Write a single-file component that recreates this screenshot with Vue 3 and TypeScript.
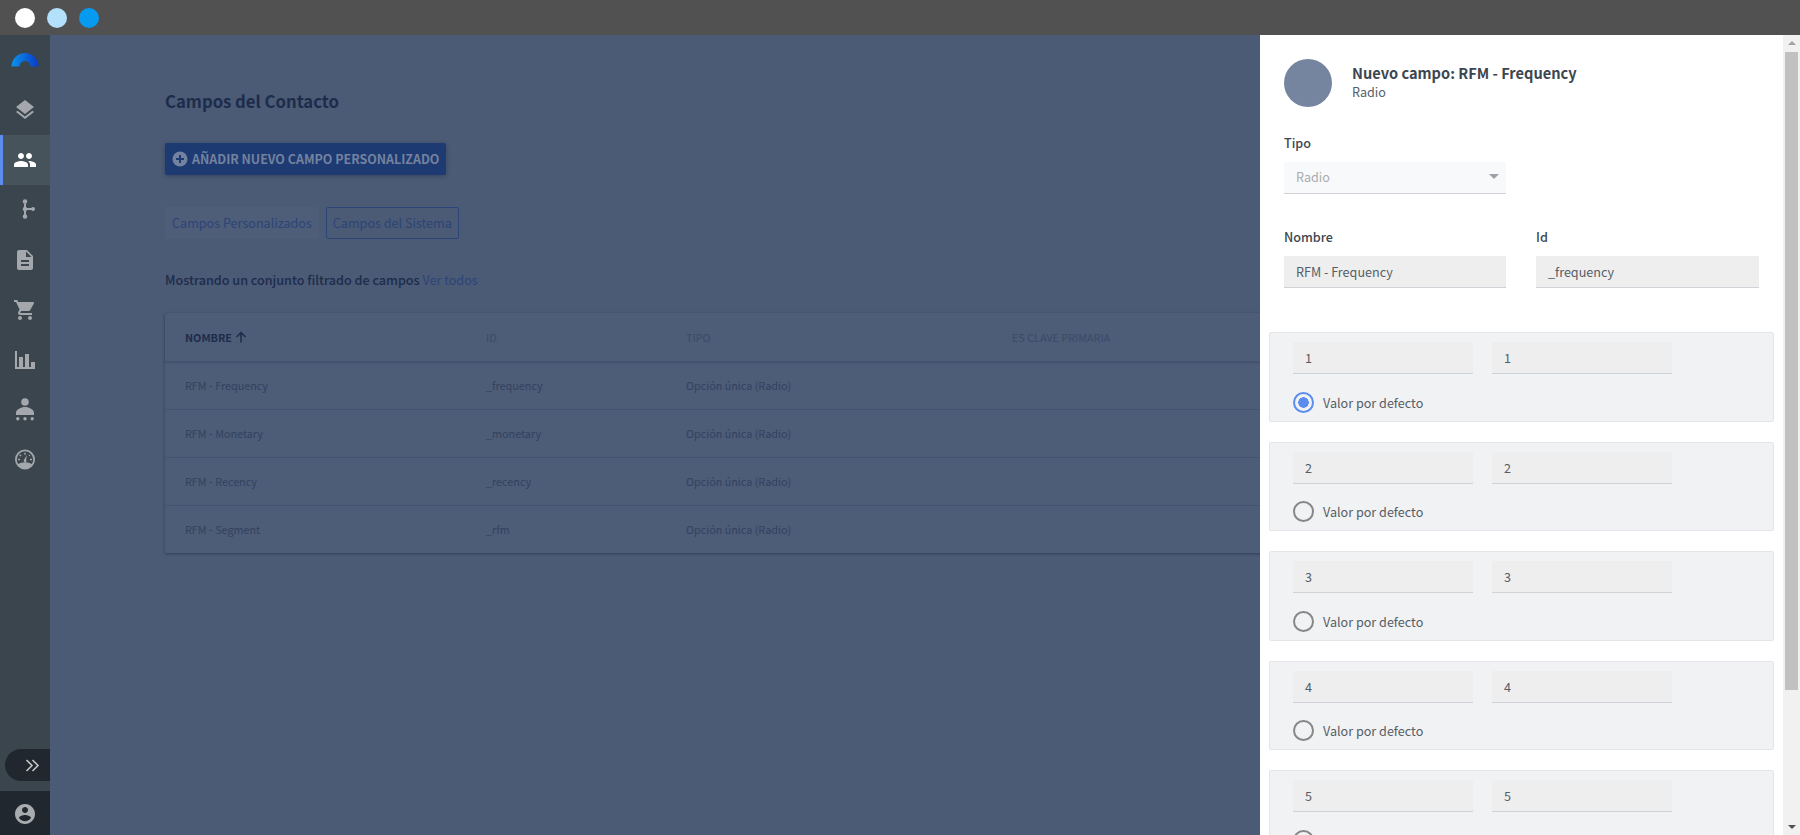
<script setup lang="ts">
const navIcons = [
  { name: 'layers', d: 'M11.99 18.54l-7.37-5.73L3 14.07l9 7 9-7-1.63-1.27-7.38 5.74zM12 16l7.36-5.73L21 9l-9-7-9 7 1.63 1.27L12 16z' },
  { name: 'people', active: true, d: 'M16 11c1.66 0 2.99-1.34 2.99-3S17.66 5 16 5c-1.66 0-3 1.34-3 3s1.34 3 3 3zm-8 0c1.66 0 2.99-1.34 2.99-3S9.66 5 8 5C6.34 5 5 6.34 5 8s1.34 3 3 3zm0 2c-2.33 0-7 1.17-7 3.5V19h14v-2.5c0-2.33-4.67-3.5-7-3.5zm8 0c-.29 0-.62.02-.97.05 1.16.84 1.97 1.97 1.97 3.45V19h6v-2.5c0-2.33-4.67-3.5-7-3.5z' },
  { name: 'flow', d: 'M11 3.500h2v15h-2zM12 10h7v2h-7zM12 1.200a2.300 2.300 0 1 1 0 4.600 2.300 2.300 0 0 1 0-4.600zM12 16.200a2.300 2.300 0 1 1 0 4.600 2.300 2.300 0 0 1 0-4.600zM12 8.700a2.300 2.300 0 1 1 0 4.600 2.300 2.300 0 0 1 0-4.600zM20 9a2 2 0 1 1 0 4 2 2 0 0 1 0-4z' },
  { name: 'description', d: 'M14 2H6c-1.1 0-1.99.9-1.99 2L4 20c0 1.1.89 2 1.99 2H18c1.1 0 2-.9 2-2V8l-6-6zm2 16H8v-2h8v2zm0-4H8v-2h8v2zm-3-5V3.5L18.5 9H13z' },
  { name: 'cart', d: 'M7 18c-1.1 0-1.99.9-1.99 2S5.9 22 7 22s2-.9 2-2-.9-2-2-2zM1 2v2h2l3.6 7.59-1.35 2.45c-.16.28-.25.61-.25.96 0 1.1.9 2 2 2h12v-2H7.42c-.14 0-.25-.11-.25-.25l.03-.12.9-1.63h7.45c.75 0 1.41-.41 1.75-1.03l3.58-6.49c.08-.14.12-.31.12-.48 0-.55-.45-1-1-1H5.21l-.94-2H1zm16 16c-1.1 0-1.99.9-1.99 2s.89 2 1.99 2 2-.9 2-2-.9-2-2-2z' },
  { name: 'chart', d: 'M2 3h2v16h18v2H2zM6 9h4v10H6zM12 6h4v13h-4zM18 14h4v5h-4z' },
  { name: 'segments', d: 'M12 .2a3.800 3.800 0 1 1 0 7.600 3.800 3.800 0 0 1 0-7.600zM3 17v-2.500C3 11.500 8 9 12 9s9 2.500 9 5.500V17zM4.800 19a1.700 1.700 0 1 1 0 3.400 1.700 1.700 0 0 1 0-3.400zM12 19a1.700 1.700 0 1 1 0 3.400 1.700 1.700 0 0 1 0-3.400zM19.200 19a1.700 1.700 0 1 1 0 3.400 1.700 1.700 0 0 1 0-3.400z' },
  { name: 'gauge', d: 'M12 1.500a10 10 0 1 0 0 20 10 10 0 0 0 0-20zm0 1.800a8.200 8.200 0 0 1 8.200 8.200c0 1.700-.5 3.300-1.400 4.600-1.800-1.200-4.200-1.900-6.800-1.900s-5 .7-6.800 1.900a8.200 8.200 0 0 1-1.400-4.600A8.200 8.200 0 0 1 12 3.300zM11.300 4.800h1.400v2h-1.400zM6.200 7.200l1-1 1.300 1.300-1 1zM5 10.800h2v1.400H5zM17 10.800h2v1.400h-2zM15.600 7.500l1-1 .8.8-1 1zM14 7l-.9 4.700a1.400 1.400 0 1 1-2.100.1z' },
]

const columns = ['ID', 'TIPO', 'ES CLAVE PRIMARIA']

const rows = [
  { name: 'RFM - Frequency', id: '_frequency' },
  { name: 'RFM - Monetary', id: '_monetary' },
  { name: 'RFM - Recency', id: '_recency' },
  { name: 'RFM - Segment', id: '_rfm' },
]

const options = [
  { value: '1', checked: true },
  { value: '2', checked: false },
  { value: '3', checked: false },
  { value: '4', checked: false },
  { value: '5', checked: false },
]
</script>

<template>
  <div class="app">
    <header class="topbar">
      <span class="dot dot-white"></span>
      <span class="dot dot-light"></span>
      <span class="dot dot-blue"></span>
    </header>

    <div class="workspace">
      <nav class="sidebar">
        <div class="logo">
          <svg width="28" height="15" viewBox="0 0 28 15">
            <defs>
              <linearGradient id="logoGrad" x1="0" y1="0" x2="1" y2="0">
                <stop offset="0" stop-color="#0b93ea" />
                <stop offset="1" stop-color="#0a3bc9" />
              </linearGradient>
            </defs>
            <path d="M0.500 14.500a13.500 13.500 0 0 1 27 0h-8a5.500 5.500 0 0 0-11 0z" fill="url(#logoGrad)" />
          </svg>
        </div>
        <a v-for="icon in navIcons" :key="icon.name" class="nav-item" :class="{ active: icon.active }">
          <svg width="24" height="24" viewBox="0 0 24 24" fill="currentColor"><path :d="icon.d" /></svg>
        </a>
        <div class="spacer"></div>
        <button type="button" class="expand">
          <svg width="15" height="13" viewBox="0 0 15 13" fill="none" stroke="currentColor" stroke-width="1.600">
            <path d="M1.500 1l5.500 5.500-5.500 5.500M7.500 1l5.500 5.500-5.500 5.500" />
          </svg>
        </button>
        <div class="user">
          <svg width="24" height="24" viewBox="0 0 24 24" fill="currentColor">
            <path d="M12 2C6.480 2 2 6.480 2 12s4.480 10 10 10 10-4.480 10-10S17.520 2 12 2zm0 3c1.660 0 3 1.340 3 3s-1.340 3-3 3-3-1.340-3-3 1.340-3 3-3zm0 14.200c-2.500 0-4.710-1.280-6-3.220.030-1.990 4-3.080 6-3.080 1.990 0 5.970 1.090 6 3.080-1.290 1.940-3.500 3.220-6 3.220z" />
          </svg>
        </div>
      </nav>

      <main class="main">
        <h1 class="title">Campos del Contacto</h1>
        <button type="button" class="btn-add">
          <svg class="btn-icon" width="16" height="16" viewBox="0 0 16 16">
            <circle cx="8" cy="8" r="7.500" fill="#74829f" />
            <path d="M7 4h2v3h3v2H9v3H7V9H4V7h3z" fill="#1d3a72" />
          </svg>
          AÑADIR NUEVO CAMPO PERSONALIZADO
        </button>
        <div class="tabs">
          <span class="tab">Campos Personalizados</span>
          <span class="tab selected">Campos del Sistema</span>
        </div>
        <p class="filter">Mostrando un conjunto filtrado de campos <a class="link">Ver todos</a></p>

        <div class="table">
          <div class="row head">
            <span class="sorted">
              NOMBRE
              <svg width="12" height="12" viewBox="0 0 12 12" fill="none" stroke="currentColor" stroke-width="1.500">
                <path d="M6 11.500V1.500M1.500 6L6 1.500 10.500 6" />
              </svg>
            </span>
            <span v-for="col in columns" :key="col">{{ col }}</span>
          </div>
          <div v-for="row in rows" :key="row.id" class="row">
            <span>{{ row.name }}</span>
            <span>{{ row.id }}</span>
            <span>Opción única (Radio)</span>
            <span></span>
          </div>
        </div>
      </main>

      <aside class="panel">
        <div class="panel-body">
          <div class="panel-header">
            <div class="avatar"></div>
            <div>
              <h2>Nuevo campo: RFM - Frequency</h2>
              <p>Radio</p>
            </div>
          </div>

          <label class="field-label tipo-label">Tipo</label>
          <div class="select">
            <span>Radio</span>
            <i class="caret"></i>
          </div>

          <div class="two-cols">
            <div>
              <label class="field-label">Nombre</label>
              <div class="input">RFM - Frequency</div>
            </div>
            <div>
              <label class="field-label">Id</label>
              <div class="input">_frequency</div>
            </div>
          </div>

          <div class="cards">
            <section v-for="opt in options" :key="opt.value" class="card">
              <div class="card-inputs">
                <div class="input">{{ opt.value }}</div>
                <div class="input">{{ opt.value }}</div>
              </div>
              <div class="radio-row">
                <span class="radio" :class="{ checked: opt.checked }"></span>
                <span class="radio-label">Valor por defecto</span>
              </div>
            </section>
          </div>
        </div>

        <div class="scrollbar">
          <i class="arrow up"></i>
          <div class="thumb"></div>
          <div class="spacer"></div>
          <i class="arrow down"></i>
        </div>
      </aside>
    </div>
  </div>
</template>

<style>
body {
  margin: 0;
  overflow: hidden;
}
</style>

<style scoped>
.app {
  height: 835px;
  display: flex;
  flex-direction: column;
  overflow: hidden;
  font-family: "Noto Sans CJK JP", "Noto Sans", sans-serif;
  font-size: 12.6px;
  line-height: 20px;
}

.topbar {
  flex: 0 0 35px;
  display: flex;
  align-items: center;
  gap: 12px;
  padding-left: 15px;
  background: #515151;
}

.dot {
  width: 20px;
  height: 20px;
  border-radius: 50%;
}

.dot-white { background: #fff; }
.dot-light { background: #b3e0fb; }
.dot-blue { background: #069af0; }

.workspace {
  flex: 1;
  display: flex;
  position: relative;
  min-height: 0;
}

.sidebar {
  flex: 0 0 50px;
  display: flex;
  flex-direction: column;
  background: #3a454d;
  color: #a4a8ac;
}

.logo {
  height: 50px;
  display: flex;
  justify-content: center;
  padding-top: 17px;
  box-sizing: border-box;
}

.nav-item {
  height: 50px;
  display: flex;
  align-items: center;
  justify-content: center;
  box-sizing: border-box;
}

.nav-item.active {
  background: #47535b;
  border-left: 3px solid #5b8def;
  padding-right: 3px;
  color: #fff;
}

.spacer {
  flex: 1;
}

.expand {
  height: 32px;
  margin: 0 0 10px 5px;
  padding: 0 0 0 10px;
  border: none;
  border-radius: 16px 0 0 16px;
  background: #20272e;
  color: #c4c6c8;
  display: flex;
  align-items: center;
  justify-content: center;
}

.user {
  height: 44px;
  padding-top: 2px;
  box-sizing: border-box;
  display: flex;
  align-items: center;
  justify-content: center;
  background: #20272e;
  color: #a9acaf;
}

.main {
  flex: 1;
  min-width: 0;
  padding: 0 0 0 115px;
  background: #4b5a75;
  color: #1d2c4b;
}

.title {
  margin: 52px 0 0;
  font-size: 16.7px;
  line-height: 28px;
  font-weight: 700;
}

.btn-add {
  display: flex;
  align-items: center;
  gap: 4px;
  width: 281px;
  height: 32px;
  margin-top: 28px;
  padding: 0 0 0 7px;
  border: none;
  border-radius: 2px;
  background: #1d3a72;
  box-shadow: 0 1px 4px rgba(20, 30, 50, 0.35);
  color: #74829f;
  font: inherit;
  font-size: 12.45px;
  font-weight: 700;
  white-space: nowrap;
}

.btn-icon {
  flex: none;
}

.tabs {
  display: flex;
  gap: 7px;
  margin-top: 32px;
}

.tab {
  padding: 5px 6px;
  border: 1px solid transparent;
  border-radius: 2px;
  background: #4e5d78;
  color: #2c4478;
}

.tab.selected {
  background: none;
  border-color: #2c4579;
}

.filter {
  margin: 31px 0 0;
  font-weight: 500;
}

.link {
  color: #2c4478;
  font-weight: 400;
}

.table {
  margin-top: 23px;
  width: 1500px;
  background: #4d5c77;
  border-radius: 2px;
  box-shadow: 0 1px 3px rgba(20, 30, 50, 0.45);
}

.row {
  display: grid;
  grid-template-columns: 301px 200px 326px 1fr;
  align-items: center;
  height: 48px;
  padding: 0 0 2px 20px;
  font-size: 10.8px;
  color: #33425f;
  border-top: 1px solid #435270;
  box-sizing: border-box;
}

.row.head {
  border-top: none;
  padding-bottom: 1px;
  color: #3b4a68;
  box-shadow: 0 2px 2px rgba(30, 40, 60, 0.18);
}

.sorted {
  display: flex;
  align-items: center;
  gap: 3px;
  color: #1d2c4b;
  font-weight: 700;
}

.panel {
  position: absolute;
  top: 0;
  right: 0;
  bottom: 0;
  width: 540px;
  display: flex;
  background: #fff;
  color: #3c4650;
}

.panel-body {
  flex: 1;
  min-width: 0;
  overflow: hidden;
}

.panel-header {
  display: flex;
  align-items: center;
  gap: 20px;
  padding: 24px 24px 0;
}

.panel-header h2 {
  margin: -3px 0 0;
  font-size: 14.6px;
  line-height: 20px;
  font-weight: 700;
}

.panel-header p {
  margin: 0;
  font-size: 12.6px;
  line-height: 18px;
  color: #56606a;
}

.avatar {
  width: 48px;
  height: 48px;
  border-radius: 50%;
  background: #75859f;
}

.field-label {
  display: block;
  font-weight: 500;
  margin-bottom: 9px;
}

.tipo-label {
  margin: 26px 24px 9px;
}

.select {
  display: flex;
  align-items: center;
  justify-content: space-between;
  width: 222px;
  height: 32px;
  margin-left: 24px;
  padding: 0 7px 2px 12px;
  box-sizing: border-box;
  background: #f8f9fa;
  border-bottom: 1px solid #cfd2d6;
  color: #a9adb1;
}

.caret {
  border-left: 5px solid transparent;
  border-right: 5px solid transparent;
  border-top: 5px solid #9aa0a6;
}

.two-cols {
  display: grid;
  grid-template-columns: 222px 223px;
  gap: 30px;
  margin: 33px 0 0 24px;
}

.input {
  height: 32px;
  padding-left: 12px;
  box-sizing: border-box;
  line-height: 32px;
  background: #eee;
  border-bottom: 1px solid #cfd2d6;
  color: #555d66;
}

.cards {
  display: flex;
  flex-direction: column;
  gap: 20px;
  margin: 44px 9px 0;
}

.card {
  flex: none;
  padding: 9px 23px 8.5px;
  border: 1px solid #e3e5e8;
  border-radius: 2px;
  background: #f1f2f4;
}

.card-inputs {
  display: flex;
  gap: 19px;
}

.card-inputs .input {
  width: 180px;
}

.radio-row {
  display: flex;
  align-items: center;
  gap: 9px;
  height: 20px;
  margin-top: 18px;
  color: #555d66;
}

.radio-label {
  padding-top: 1px;
}

.radio {
  width: 21px;
  height: 21px;
  box-sizing: border-box;
  border: 2.5px solid #878787;
  border-radius: 50%;
}

.radio.checked {
  border-color: #5b8def;
  background: radial-gradient(circle, #5b8def 0 5px, transparent 5.500px);
}

.scrollbar {
  flex: 0 0 17px;
  display: flex;
  flex-direction: column;
  align-items: center;
  background: #f1f1f1;
}

.thumb {
  width: 13px;
  height: 638px;
  background: #c1c1c1;
}

.arrow {
  display: block;
  width: 0;
  height: 0;
  border-left: 4px solid transparent;
  border-right: 4px solid transparent;
}

.arrow.up {
  border-bottom: 4px solid #a3a3a3;
  margin: 6px 0 7px;
}

.arrow.down {
  border-top: 4px solid #505050;
  margin: 7px 0 6px;
}
</style>
